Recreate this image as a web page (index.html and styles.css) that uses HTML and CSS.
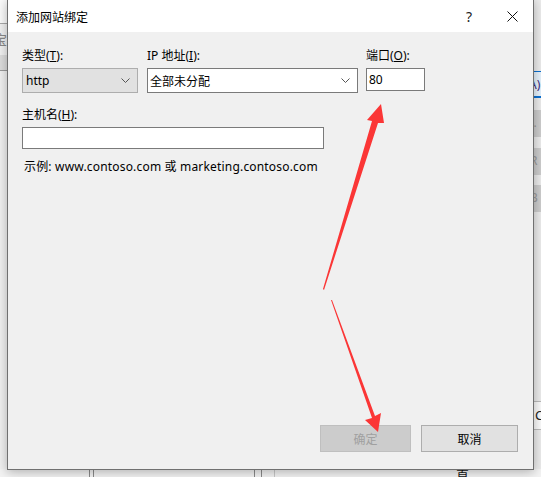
FILE: index.html
```html
<!DOCTYPE html>
<html lang="zh-CN">
<head>
<meta charset="utf-8">
<title>添加网站绑定</title>
<link rel="stylesheet" href="styles.css">
</head>
<body>
<div class="desk">
  <div class="bg-left">
    <div class="bl-top"></div>
    <div class="bl-mid"><span>宝</span></div>
    <div class="bl-band"></div>
  </div>
  <div class="bg-right">
    <div class="br-btn br-blue">A)</div>
    <div class="br-btn br-gray b1">).</div>
    <div class="br-btn br-gray b2">R</div>
    <div class="br-btn br-gray b3">B</div>
    <div class="br-box">C</div>
  </div>
  <div class="bg-bottom">
    <span class="vl l1"></span><span class="vl l2"></span><span class="vl l3"></span><span class="vl l4"></span><span class="vl l5"></span>
    <span class="bb-text">直</span>
  </div>

  <div class="dialog">
    <div class="titlebar">
      <span class="title">添加网站绑定</span>
      <span class="help">?</span>
      <span class="close">
        <svg width="11" height="11" viewBox="0 0 11 11"><path d="M0.5 0.5 L10.5 10.5 M10.5 0.5 L0.5 10.5" stroke="#111" stroke-width="1" fill="none"/></svg>
      </span>
    </div>
    <div class="body">
      <div class="row1">
        <div class="field f-type">
          <label class="lbl">类型(<u>T</u>):</label>
          <div class="select gray">
            <span>http</span>
            <svg class="chev" width="9" height="5" viewBox="0 0 9 5"><path d="M0.5 0.5 L4.5 4.5 L8.5 0.5" stroke="#555" stroke-width="1" fill="none"/></svg>
          </div>
        </div>
        <div class="field f-ip">
          <label class="lbl">IP 地址(<u>I</u>):</label>
          <div class="select white">
            <span>全部未分配</span>
            <svg class="chev" width="9" height="5" viewBox="0 0 9 5"><path d="M0.5 0.5 L4.5 4.5 L8.5 0.5" stroke="#555" stroke-width="1" fill="none"/></svg>
          </div>
        </div>
        <div class="field f-port">
          <label class="lbl">端口(<u>O</u>):</label>
          <div class="input port">80</div>
        </div>
      </div>
      <div class="row2">
        <label class="lbl">主机名(<u>H</u>):</label>
        <div class="input host"></div>
        <p class="example">示例: www.contoso.com 或 marketing.contoso.com</p>
      </div>
      <div class="spacer"></div>
      <div class="footer">
        <button class="btn disabled">确定</button>
        <button class="btn">取消</button>
      </div>
    </div>

    <svg class="arrows" width="526" height="469" viewBox="7 0 526 469">
      <polygon fill="#fb3636" points="323,289 372,121 367,120 381,104 384,123 378,123 324,290"/>
      <polygon fill="#fb3636" points="331,300 372,418 365,420 378,432 381,413 375,416 332,300"/>
    </svg>
  </div>
</div>
</body>
</html>
```

FILE: styles.css
```css
* { box-sizing: border-box; }
html, body { margin: 0; padding: 0; }
body {
  width: 541px;
  height: 477px;
  overflow: hidden;
  font-family: "Noto Sans", "Noto Sans CJK SC", sans-serif;
  font-size: 12px;
  color: #000;
}
.desk {
  position: relative;
  width: 541px;
  height: 477px;
  background: #f0f0f0;
  overflow: hidden;
}

/* background window peeking out */
.bg-left {
  position: absolute; left: 0; top: 0; width: 7px; height: 469px;
  display: flex; flex-direction: column;
}
.bl-top { height: 24px; background: #fafafa; border-bottom: 1px solid #a8a8a8; }
.bl-mid { height: 31px; background: #f0f0f0; color: #888; font-size: 13px; line-height: 31px; }
.bl-mid span { margin-left: -6px; }
.bl-band { height: 16px; background: #dcdcdc; border-bottom: 1px solid #9a9a9a; }

.bg-right {
  position: absolute; left: 533px; top: 0; width: 8px; height: 469px;
  background: #ebebeb;
}
.br-btn { position: absolute; left: 0; width: 20px; font-size: 12px; line-height: 25px; overflow: hidden; }
.br-blue { top: 71px; height: 27px; border-top: 1px solid #0a6fd0; border-bottom: 2px solid #0a6fd0; background: #e5f1fb; text-indent: -4px; color: #3a2a80; }
.br-gray { height: 27px; background: #cccccc; color: #9a9a9a; text-indent: -3px; }
.b1 { top: 110px; }
.b2 { top: 148px; }
.b3 { top: 185px; }
.br-box { position: absolute; left: 0; top: 401px; width: 10px; height: 29px; background: #fafafa; border-top: 1px solid #bbb; border-bottom: 1px solid #bbb; line-height: 27px; text-indent: 2px; color: #222; font-size: 13px; }

.bg-bottom {
  position: absolute; left: 0; top: 469px; width: 541px; height: 8px;
  background: #f3f3f3;
}
.vl { position: absolute; top: 0; width: 1px; height: 8px; background: #8a8a8a; }
.l1 { left: 89px; } .l2 { left: 93px; } .l3 { left: 254px; } .l4 { left: 261px; } .l5 { left: 274px; background: #c8c8c8; }
.bb-text { position: absolute; left: 456px; top: -1px; font-size: 13px; line-height: 14px; color: #111; }

/* dialog */
.dialog {
  position: absolute;
  left: 7px; top: -1px;
  width: 527px;
  height: 471px;
  border: 1px solid #707070;
  background: #f0f0f0;
  box-shadow: 0 2px 10px rgba(0,0,0,0.28);
  display: flex;
  flex-direction: column;
}
.titlebar {
  height: 32px;
  background: #ffffff;
  display: flex;
  align-items: center;
  padding-left: 8px;
}
.title { flex: 1; font-size: 12px; padding-top: 1px; }
.help { width: 14px; font-size: 14px; margin-right: 31px; text-align: center; padding-top: 1px; color: #222; }
.close { width: 11px; height: 11px; margin-right: 15px; display: flex; }

.body {
  flex: 1;
  display: flex;
  flex-direction: column;
  padding: 16px 15px 17px 14px;
}
.row1 {
  display: grid;
  grid-template-columns: 116px 211px 58px;
  column-gap: 9px;
}
.f-port { margin-left: -1px; }
.lbl { display: block; line-height: 16px; height: 16px; margin-bottom: 4px; }
.select {
  height: 25px;
  display: flex;
  align-items: center;
  justify-content: space-between;
  padding: 0 7px 0 3px;
}
.select.gray { background: #e1e1e1; border: 1px solid #adadad; }
.select.white { background: #ffffff; border: 1px solid #7a7a7a; padding-left: 2px; }
.chev { display: block; }
.input {
  background: #ffffff;
  border: 1px solid #7a7a7a;
}
.port { height: 23px; line-height: 21px; padding-left: 2px; }

.row2 { margin-top: 14px; }
.host { width: 302px; height: 22px; margin-top: 2px; }
.example { margin: 10px 0 0 2px; line-height: 16px; letter-spacing: 0.18px; }

.spacer { flex: 1; }
.footer {
  display: flex;
  justify-content: flex-end;
  gap: 10px;
}
.btn {
  font-family: inherit;
  font-size: 12px;
  height: 27px;
  padding: 0;
  background: #e1e1e1;
  border: 1px solid #adadad;
  color: #000;
  width: 97px;
  border-radius: 0;
}
.btn.disabled {
  width: 91px;
  background: #cccccc;
  border-color: #bfbfbf;
  color: #a0a0a0;
}
.arrows {
  position: absolute;
  left: -1px; top: 0;
  pointer-events: none;
}
```
